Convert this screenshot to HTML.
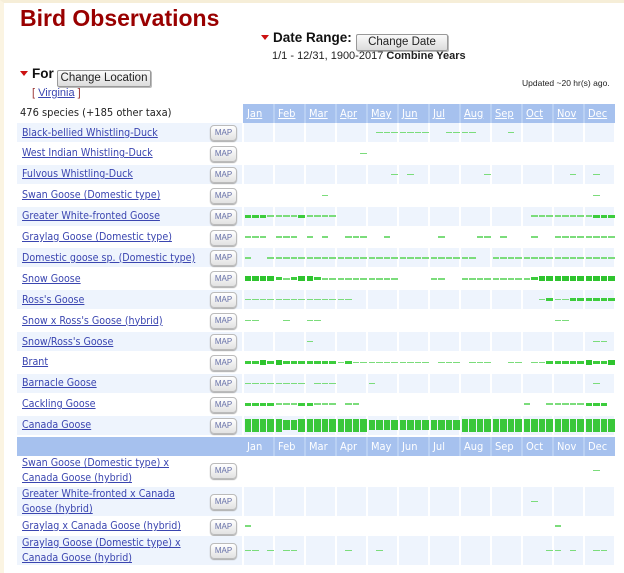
<!DOCTYPE html>
<html><head><meta charset="utf-8"><style>
body{margin:0;width:624px;height:573px;overflow:hidden;background:#fff;font-family:"DejaVu Sans",Verdana,sans-serif;position:relative}
.frame{position:absolute;left:0;top:0;width:624px;height:573px;border-top:3px solid #f6eed8;border-left:4px solid #fbf4e2;box-sizing:border-box}
.a{position:absolute;white-space:nowrap}
h1{position:absolute;left:20px;top:5px;margin:0;font-family:"Liberation Sans",Arial,sans-serif;font-size:23px;font-weight:bold;color:#990000}
.btn{position:absolute;background:linear-gradient(#fafafa,#dcdcdc);border:1px solid #999;border-radius:2px;font-family:"Liberation Sans",Arial,sans-serif;font-size:11.5px;color:#222;text-align:center;box-shadow:1px 1px 0 #bbb}
.tri{display:inline-block;width:0;height:0;border-left:4px solid transparent;border-right:4px solid transparent;border-top:5px solid #cc1111;margin-right:4px;vertical-align:2px}
.lbl{font-size:13.5px;font-weight:bold;font-family:"Liberation Sans",Arial,sans-serif;color:#111}
.nm{position:absolute;left:5px;font-size:10.6px;color:#3a45b0;text-decoration:underline;line-height:15px;font-family:"DejaVu Sans Condensed","DejaVu Sans",sans-serif}
.map{position:absolute;left:193px;width:25px;height:14px;border:1px solid #bbb;border-radius:4px;background:linear-gradient(#fff,#e2e2e2);font-size:8px;color:#6670a8;text-align:center;line-height:14px;box-shadow:0 1px 1px #aaa;font-family:"Liberation Sans",sans-serif}
.cell{position:absolute;width:29px;background:#eef4fd}
.seg{position:absolute}
.hd{position:absolute;background:#a6c1ee}
.mo{position:absolute;width:29px;height:19px;color:#fff;font-size:11px;line-height:19px;padding-left:3px;box-sizing:border-box;font-family:"DejaVu Sans Condensed","DejaVu Sans",sans-serif}
</style></head><body>
<div class="frame"></div>
<h1>Bird Observations</h1>
<div class="a lbl" style="left:261px;top:30px"><span class="tri"></span>Date Range:</div>
<div class="btn" style="left:356px;top:34px;width:90px;height:15px;line-height:15px">Change Date</div>
<div class="a" style="left:272px;top:50px;font-size:11px;font-family:'Liberation Sans',sans-serif;color:#222">1/1 - 12/31, 1900-2017 <b>Combine Years</b></div>
<div class="a lbl" style="left:20px;top:66px"><span class="tri"></span>For</div>
<div class="btn" style="left:57px;top:70px;width:92px;height:15px;line-height:15px">Change Location</div>
<div class="a" style="left:32px;top:87px;font-size:11px;color:#993333;font-family:'Liberation Sans',sans-serif">[ <span style="color:#3a45b0;text-decoration:underline">Virginia</span> ]</div>
<div class="a" style="left:522px;top:78px;font-size:8.5px;color:#222;font-family:'Liberation Sans',sans-serif">Updated ~20 hr(s) ago.</div>
<div class="a" style="left:20px;top:106px;font-size:11px;color:#222;font-family:'DejaVu Sans Condensed','DejaVu Sans',sans-serif">476 species (+185 other taxa)</div>
<div id="g"></div>
<script>
var M=["Jan","Feb","Mar","Apr","May","Jun","Jul","Aug","Sep","Oct","Nov","Dec"];
var X=[244,275,306,337,368,399,430,461,492,523,554,585];
var h='';
function hdr(top,full,ul){
 if(full)h+='<div class="hd" style="left:17px;top:'+top+'px;width:598px;height:19px"></div>';
 else h+='<div class="hd" style="left:243px;top:'+top+'px;width:372px;height:19px"></div>';
 for(var i=0;i<12;i++){h+='<div class="mo" style="left:'+X[i]+'px;top:'+top+'px;'+(ul?'text-decoration:underline':'')+'">'+M[i]+'</div>';
 if(i>0)h+='<div style="position:absolute;left:'+(X[i]-2)+'px;top:'+top+'px;width:2px;height:19px;background:#b9d0f3"></div>';}
}
hdr(104,false,true);hdr(437,true,false);
var rows=[
["Black-bellied Whistling-Duck","    |    |    |    | ---|----|  --|--  |  - |    |    |    "],
["West Indian Whistling-Duck","    |    |    |   -|    |    |    |    |    |    |    |    "],
["Fulvous Whistling-Duck","    |    |    |    |   -| -  |    |   -|    |    |  - | -  "],
["Swan Goose (Domestic type)","    |    |  - |    |    |    |    |    |    |    |    | -  "],
["Greater White-fronted Goose","===-|---=|----|    |    |    |    |    |    | ---|----|-==="],
["Graylag Goose (Domestic type)","--- |--- |- - | ---|  - |    | -  |  --| -  | -  |----|----"],
["Domestic goose sp. (Domestic type)","-  -|----|----|----|----|----|----|--  |----|----|----|----"],
["Snow Goose","####|=-=#|#=--|----|----|    |--  |----|----|-=##|####|####"],
["Ross's Goose","----|----|----|--  |    |    |    |    |    |  -=|--==|===="],
["Snow x Ross's Goose (hybrid)","--  | -  |--  |    |    |    |    |    |    |    |--  |    "],
["Snow/Ross's Goose","    |    |-   |    |    |    |    |    |    |    |    | -- "],
["Brant","==#=|#===|====|-=--|----|----| ---| ---|  --| --=|====|#==#"],
["Barnacle Goose","----|----| ---|    |-   |    |    |    |    |    |    | -  "],
["Cackling Goose","====|---=|=---| -- |    |    |    |    |    |-  |----|-==="],
["Canada Goose","BBBB|BbbB|BBBB|BBBB|bbbb|bbbb|bbbb|BBBB|BBBB|BBBB|BBBB|BBBB"]
];
var hy=[
["Swan Goose (Domestic type) x<br>Canada Goose (hybrid)","    |    |    |    |    |    |    |    |    |    |    | -  ",31,false],
["Greater White-fronted x Canada<br>Goose (hybrid)","    |    |    |    |    |    |    |    |    | -  |    |    ",31,true],
["Graylag x Canada Goose (hybrid)","-   |    |    |    |    |    |    |    |    |    |-   |    ",18,false],
["Graylag Goose (Domestic type) x<br>Canada Goose (hybrid)","-- -| -- |    | -  | -  |    |    |    |    |   -|- - | -- ",31,true]
];
function bars(s,top,hgt){
 s=s.replace(/\|/g,'');
 var mid=top+hgt/2;
 for(var w=0;w<48;w++){var c=s[w];if(c==' '||!c)continue;
  var m=Math.floor(w/4),k=w%4;var x=X[m]+1+k*7.4;
  var H,col;
  if(c=='-'){H=1.5;col='#7bdc7b'}else if(c=='='){H=3;col='#3ccc3c'}else if(c=='#'){H=5;col='#2ec42e'}else if(c=='B'){H=13;col='#3ac73a'}else{H=10;col='#3ac73a'}
  h+='<div class="seg" style="left:'+x.toFixed(1)+'px;top:'+(mid-H/2).toFixed(1)+'px;width:6.4px;height:'+H+'px;background:'+col+'"></div>';}
}
function row(nm,pat,top,hgt,blue){
 if(blue){h+='<div style="position:absolute;left:17px;top:'+top+'px;width:225px;height:'+(hgt-2)+'px;background:#eef4fd"></div>';
  for(var i=0;i<12;i++)h+='<div class="cell" style="left:'+X[i]+'px;top:'+top+'px;height:'+(hgt-2)+'px"></div>';}
 var lines=nm.indexOf('<br>')>=0?2:1;
 h+='<div class="nm" style="left:22px;top:'+(top+(hgt-1)/2-lines*7.5)+'px;position:absolute">'+nm+'</div>';
 h+='<div class="map" style="left:210px;top:'+(top+(hgt-1)/2-8)+'px">MAP</div>';
 bars(pat,top,hgt-2);
}
var t=123;
for(var i=0;i<rows.length;i++){row(rows[i][0],rows[i][1],t,21,i%2==0);t+=20.9;}
t=456;
for(var i=0;i<hy.length;i++){row(hy[i][0],hy[i][1],t,hy[i][2],hy[i][3]);t+=hy[i][2];}
document.getElementById('g').innerHTML=h;
</script>
</body></html>
